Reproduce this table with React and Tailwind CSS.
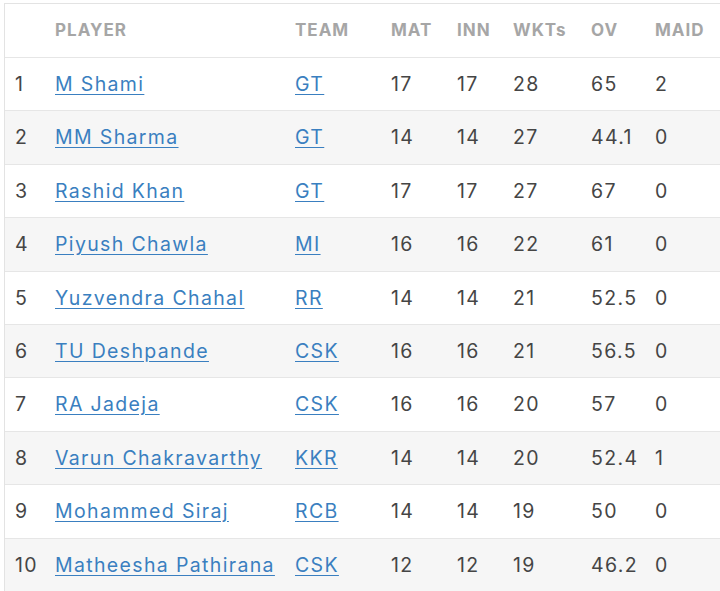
const rows = [
  [1, "M Shami", "GT", 17, 17, 28, "65", 2],
  [2, "MM Sharma", "GT", 14, 14, 27, "44.1", 0],
  [3, "Rashid Khan", "GT", 17, 17, 27, "67", 0],
  [4, "Piyush Chawla", "MI", 16, 16, 22, "61", 0],
  [5, "Yuzvendra Chahal", "RR", 14, 14, 21, "52.5", 0],
  [6, "TU Deshpande", "CSK", 16, 16, 21, "56.5", 0],
  [7, "RA Jadeja", "CSK", 16, 16, 20, "57", 0],
  [8, "Varun Chakravarthy", "KKR", 14, 14, 20, "52.4", 1],
  [9, "Mohammed Siraj", "RCB", 14, 14, 19, "50", 0],
  [10, "Matheesha Pathirana", "CSK", 12, 12, 19, "46.2", 0],
];

const cols = "grid grid-cols-[41px_240px_96px_66px_56px_78px_64px_90px]";

export default function App() {
  return (
    <div className="w-[720px] h-[591px] overflow-hidden bg-white pt-[3px] pl-[4px]" style={{ fontFamily: "Inter, 'Noto Sans', sans-serif" }}>
      <div className="w-[730px] border-l border-t border-[#e3e3e3]">
        <div className={`${cols} h-[54px] items-center border-b border-[#e6e6e6] bg-white pt-[1px] text-[17px] font-bold tracking-[1px] text-[#a6a6a6]`}>
          <div></div>
          <div className="pl-[9px]">PLAYER</div>
          <div className="pl-[9px]">TEAM</div>
          <div className="pl-[9px]">MAT</div>
          <div className="pl-[9px]">INN</div>
          <div className="pl-[9px]">WKTs</div>
          <div className="pl-[9px]">OV</div>
          <div className="pl-[9px]">MAID</div>
        </div>
        {rows.map((r, i) => (
          <div
            key={r[0]}
            className={`${cols} h-[53.4px] items-center border-b border-[#e6e6e6] pt-[1px] text-[19.5px] tracking-[1.35px] text-[#454545] ${i % 2 === 1 ? "bg-[#f6f6f6]" : "bg-white"}`}
          >
            <div className="pl-[10px]">{r[0]}</div>
            <div className="pl-[9px]"><a href="#" className="text-[#3a7fc0] underline underline-offset-[3px]">{r[1]}</a></div>
            <div className="pl-[9px]"><a href="#" className="text-[#3a7fc0] underline underline-offset-[3px]">{r[2]}</a></div>
            <div className="pl-[9px]">{r[3]}</div>
            <div className="pl-[9px]">{r[4]}</div>
            <div className="pl-[9px]">{r[5]}</div>
            <div className="pl-[9px]">{r[6]}</div>
            <div className="pl-[9px]">{r[7]}</div>
          </div>
        ))}
      </div>
    </div>
  );
}
